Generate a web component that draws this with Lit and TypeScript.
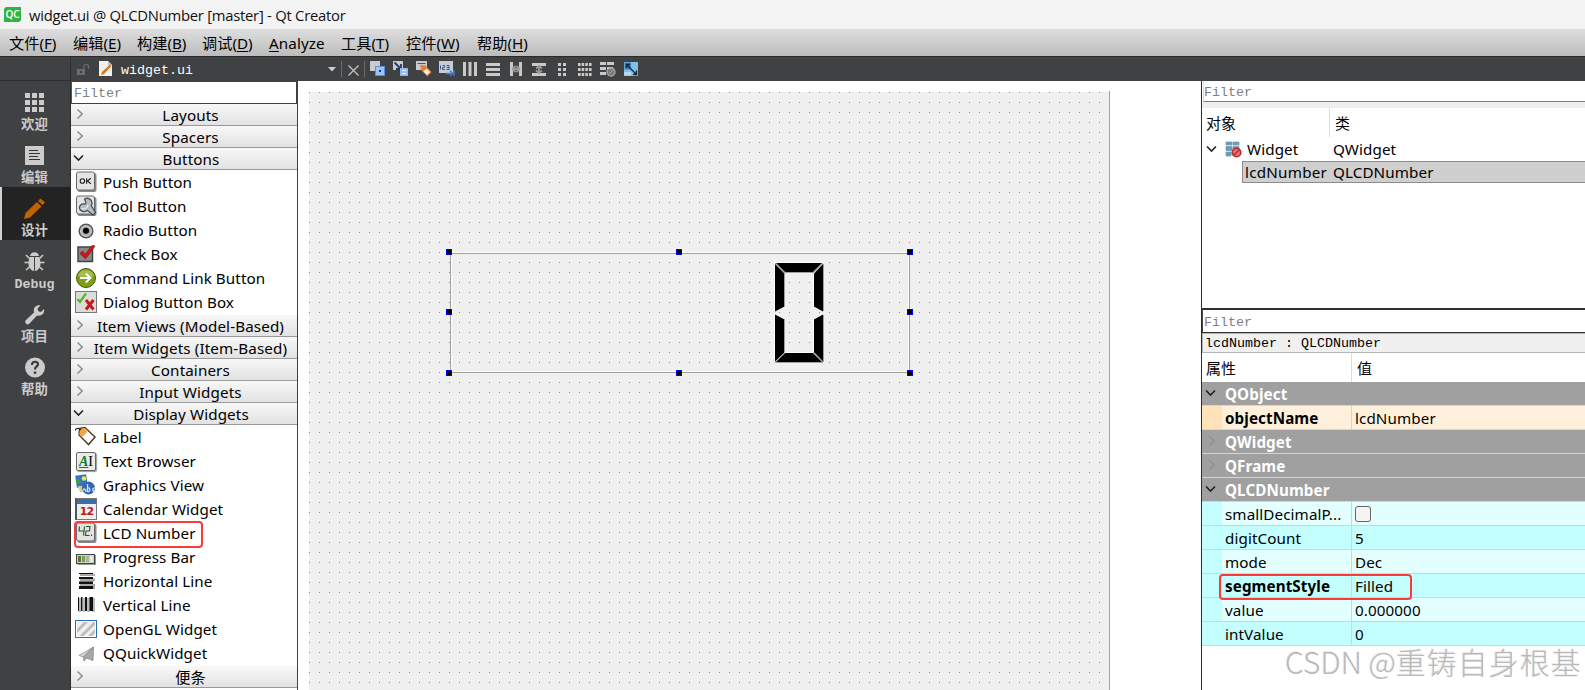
import { LitElement, html, css, svg, nothing } from "lit";
import { customElement } from "lit/decorators.js";
import { classMap } from "lit/directives/class-map.js";

const chevronRight = svg`<svg class="chev" width="8" height="12" viewBox="0 0 8 12"><path d="M1.5 1.5 6.2 6 1.5 10.5" fill="none" stroke="#8c8c8c" stroke-width="1.5"/></svg>`;
const chevronDown = svg`<svg class="chev" width="12" height="8" viewBox="0 0 12 8"><path d="M1 1.5 5.5 6 10 1.5" fill="none" stroke="#222" stroke-width="1.6"/></svg>`;

const box = (body: unknown) => html`<svg width="22" height="22" viewBox="0 0 22 22">${body}</svg>`;

const frame = svg`
  <rect x="2.5" y="2" width="19" height="19" rx="2" fill="#8a8a8a"/>
  <rect x="1.5" y="1" width="18" height="18" rx="2" fill="#e4e4e4" stroke="#666"/>`;

const icons: Record<string, unknown> = {
  push: box(svg`${frame}<g fill="none" stroke="#222" stroke-width="1.1"><ellipse cx="7.4" cy="10" rx="2.2" ry="2.3"/><path d="M11.6 7.3v5.4M15.8 7.3l-3.4 2.7 3.4 2.7"/></g>`),
  tool: box(svg`${frame}<path d="M4.500 13.500c-.5-2.500 1.500-4.800 4.500-4.500 1.800.2 2.500-.8 1.500-2.500L9.500 4c3.500-2 7.500.5 7.500 4 0 1.500-.8 2.800-.8 2.800l4.300 6.700-2.500 2.500-5.500-4.500c-3 1.800-6.800 1.500-8-2z" fill="#b9bec5" stroke="#4a4f57" stroke-width="1.300"/><path d="M6.500 13.500c3 1 6-.5 6.500-3.500" stroke="#fff" fill="none"/>`),
  radio: box(svg`<circle cx="11" cy="12" r="6.800" fill="#c9c9c9" stroke="#555" stroke-width="1.500"/><circle cx="11" cy="12" r="4.600" fill="#aaa"/><circle cx="11" cy="11.800" r="3" fill="#000"/>`),
  check: box(svg`<rect x="3" y="4" width="14.500" height="14.500" fill="#888" stroke="#444" stroke-width="1.500"/><path d="M5 10.500 7.500 8l2.700 3.500L17 2.500l3 .6-9.400 12.700z" fill="#d81818" stroke="#8a0d0d" stroke-width=".8"/>`),
  command: box(svg`<circle cx="11" cy="11" r="9.500" fill="#7f9d16" stroke="#46570b"/><path d="M3 9a8.300 8.300 0 0 1 16 0c-4 2-12 2-16 0z" fill="#a5bd4e"/><path d="M5 11h10M10.800 6.500 15.400 11l-4.600 4.500" fill="none" stroke="#fff" stroke-width="2"/>`),
  dialog: box(svg`<rect x=".5" y=".5" width="21" height="21" fill="#dcdcdc" stroke="#777"/><path d="M2.500 8 5 11l6-8.500" fill="none" stroke="#57b32a" stroke-width="2.200"/><path d="M11 9l7.500 9.500M18.500 9 11 18.500" stroke="#c41c1c" stroke-width="3"/>`),
  label: box(svg`<path d="M5 3.500 10.500 2l10.500 9-7.500 9L4.500 9.500z" fill="#777" opacity=".5"/><path d="M4.500 2.500 10 1.500l10 9.500-6.500 7.500L4 9z" fill="#fff" stroke="#4d3115" stroke-width="1.300"/><path d="M5 3l5-1 3 3-6 6.500L4.500 8.500z" fill="#f0a64f"/><path d="M0 4.500C1 2 4 1.500 6 4" fill="none" stroke="#222" stroke-width="1.200"/>`),
  textb: html`<span class="text-icon"><i>A</i><b>I</b></span>`,
  graphics: box(svg`<rect x="1" y="1" width="11" height="12" fill="#2f78c8" transform="rotate(-8 6 7)"/><circle cx="9" cy="4.500" r="2.300" fill="#ffe14a"/><path d="M1 6c2-2 4-1 4.500 1S4 10 2 10z" fill="#44a031"/><path d="M3 12h5v6H5z" fill="#d8c98a"/><circle cx="13.500" cy="14" r="6.500" fill="#3567ad"/><path d="M8 16.500c1.500-3 3-1 3 1.500M12.500 10v7.500c3 1 3-4.500.3-3.500M20 14c-3-.5-3 4 0 3.500" fill="none" stroke="#cfe0f6" stroke-width="1.300"/>`),
  calendar: html`<span class="cal-icon"><span class="cal-top"></span><span class="cal-day">12</span></span>`,
  lcd: box(svg`${frame}<g fill="none" stroke="#1d5a1d" stroke-width="1.100"><path d="M4.500 4.500 4 9h5M9.500 4.500 8.500 13.500M11 4.500h4l-.5 4.500h-3.500l-.5 4.500h4"/><path d="M16.500 12.500v1.500"/></g>`),
  progress: box(svg`<rect x="2.500" y="9" width="18.500" height="10" fill="#999"/><rect x="1.500" y="8.500" width="18" height="9" fill="#cfd3c8" stroke="#444"/><path d="M3 10h3v6H3z" fill="#4f7d2b"/><path d="M7 10h3v6H7z" fill="#7d9a61"/><path d="M11 10h3v6h-3z" fill="#a9b59b"/><path d="M15 10h3v6h-3z" fill="#e6e8e2"/>`),
  hline: box(svg`<path d="M5 4h15v2H5zM5 8.500h15v3H5zM5 14h15v5H5z" fill="#aaa"/><path d="M4 3h14v1H4zM4 7h14v2H4zM4 11.500h14v2.500H4zM4 16h14v3H4z" fill="#111"/>`),
  vline: box(svg`<path d="M4 4h2v14H4zM8 4h2v14H8zM12 4h3v14h-3zM17 4h3v14h-3z" fill="#bbb"/><path d="M3 3h1v14H3zM6 3h1.500v14H6zM10 3h2v14h-2zM14.500 3H18v14h-3.500z" fill="#111"/>`),
  opengl: box(svg`<rect x=".5" y="2.500" width="21" height="17" fill="#fff" stroke="#2c6cb8"/><rect x="2" y="4" width="18" height="14" fill="#f0f0f0"/><path d="M2 11 9 4h4L2 15zM4.500 18 18.500 4H20v2.500L8.500 18zM13 18l7-7v4l-3 3z" fill="#bdbdbd"/>`),
  quick: box(svg`<path d="M18.500 5 4 13.500l4.500 1.500z" fill="#d5d5d5" stroke="#888" stroke-width=".7"/><path d="M18.500 5 8.500 15l.5 4 2.500-3 6.500 2.500z" fill="#a9a9a9" stroke="#777" stroke-width=".7"/>`),
};

const rail = [
  { text: "欢迎", icon: svg`<path d="M1 1h5v5H1zM8 1h5v5H8zM15 1h5v5h-5zM1 8h5v5H1zM8 8h5v5H8zM15 8h5v5h-5zM1 15h5v5H1zM8 15h5v5H8zM15 15h5v5h-5z"/>` },
  { text: "编辑", icon: svg`<path d="M1 1h19v19H1z"/><path d="M5 5.500h9M5 8.500h11M5 11.500h9M5 14.500h11" stroke="#333" stroke-width="1.200"/>` },
  { text: "设计", icon: svg`<path d="M0 21l1.500-6L13 4l4.500 4.500L6 19.500zM14 3l2.500-2.500L21 4.500 18.500 7z" fill="#bf6200"/>`, active: true },
  { text: "Debug", icon: svg`<path d="M6 5a4.600 4.600 0 0 1 9 0z"/><path d="M10 6v14c-3-.5-5.500-3.500-5.500-7.500 0-3 .8-5 1.700-6.500zM11 6v14c3-.5 5.500-3.500 5.500-7.500 0-3-.8-5-1.700-6.500z"/><path d="M2 4l4 4M19 4l-4 4M.5 11.500h4.500M20.500 11.500H16M2 19l4-3.500M19 19l-4-3.500" stroke="#ccc" stroke-width="1.600"/>`, mono: true },
  { text: "项目", icon: svg`<path d="M1.500 16.500 10 8.500C9 4 12 .5 16.500 1.500L13.500 4.500l.8 2.700 2.700.8 3-3c1 4.500-2.500 7.500-7 6.500l-8 8.500c-2.500 1.500-4.500-1-3.500-3.500z"/>` },
  { text: "帮助", icon: svg`<circle cx="11" cy="10.500" r="10"/><path d="M8 8c0-4.500 6.500-4 6-.5-.3 2-3 2-3 5" fill="none" stroke="#3a3b3d" stroke-width="2.200"/><path d="M9.800 14.500h2.400v2.400H9.800z" fill="#3a3b3d"/>` },
];

type Group = { name: string; open?: boolean; items?: [string, string][] };
const groups: Group[] = [
  { name: "Layouts" },
  { name: "Spacers" },
  { name: "Buttons", open: true, items: [["push", "Push Button"], ["tool", "Tool Button"], ["radio", "Radio Button"], ["check", "Check Box"], ["command", "Command Link Button"], ["dialog", "Dialog Button Box"]] },
  { name: "Item Views (Model-Based)" },
  { name: "Item Widgets (Item-Based)" },
  { name: "Containers" },
  { name: "Input Widgets" },
  { name: "Display Widgets", open: true, items: [["label", "Label"], ["textb", "Text Browser"], ["graphics", "Graphics View"], ["calendar", "Calendar Widget"], ["lcd", "LCD Number"], ["progress", "Progress Bar"], ["hline", "Horizontal Line"], ["vline", "Vertical Line"], ["opengl", "OpenGL Widget"], ["quick", "QQuickWidget"]] },
  { name: "便条" },
];

const tools = [
  svg`<path d="M0 0h10v10H0z" fill="#c9cbce"/><path d="M5 5h10v10H5z" fill="#5b8fe0"/><path d="M6 6h8v8H6z" fill="#9cc2fa"/><path d="M9 9h2v2H9z" fill="#123a86"/>`,
  svg`<path d="M0 0h10v9H0z" fill="#c9cbce"/><path d="M1.500 1.500l5.500 5.500M8 3v5H3" stroke="#1f3c66" stroke-width="1.800" fill="none"/><path d="M7 7h8v8H7z" fill="#8fb8f4"/><path d="M9 9.500h4M9 12.500h4" stroke="#fff"/>`,
  svg`<path d="M0 0h11v9H0z" fill="#c9cbce"/><path d="M1.500 2.500h8" stroke="#555"/><path d="M4 4l5.500.5L15.500 11l-4 4.500-6-6z" fill="#ee7a33"/><path d="M10.500 7.500 14 11l-3 3-3.500-3.500z" fill="#fff0e3"/>`,
  svg`<path d="M0 0h14v12H0z" fill="#c9cbce"/><path d="M1.500 4.500v4M3.500 4.500h2v2h-2v2h2.500M7.500 4.500h2.500v4H7.500M7.500 6.500H10" stroke="#2560b0" fill="none"/><path d="M7 12.500h6M11 9.500l2.500 3-2.500 2.500M15 9v6" stroke="#3c7de0" stroke-width="1.400" fill="none"/>`,
  svg`<path d="M1 1h3v14H1zM6.500 1h3v14h-3zM12 1h3v14h-3z" fill="#c9c9c9"/>`,
  svg`<path d="M1 2h14v3H1zM1 7h14v3H1zM1 12h14v3H1z" fill="#c9c9c9"/>`,
  svg`<path d="M2 1h3v14H2zM11 1h3v14h-3z" fill="#c9c9c9"/><path d="M5 8h6M7.500 5 4.500 8l3 3M8.500 5l3 3-3 3" stroke="#999" stroke-width="1.800" fill="none"/>`,
  svg`<path d="M1 2h14v3H1zM1 12h14v3H1z" fill="#c9c9c9"/><path d="M8 5v7M5 7.500 8 5l3 2.500M5 9.500 8 12l3-2.500" stroke="#999" stroke-width="1.800" fill="none"/>`,
  svg`<path d="M4 2h3v3H4zM9 2h3v3H9zM4 7h3v3H4zM9 7h3v3H9zM4 12h3v3H4zM9 12h3v3H9z" fill="#c9c9c9"/>`,
  svg`<path d="M1 2h2.600v3H1zM4.600 2h2.600v3H4.600zM8.300 2h2.600v3H8.300zM12 2h2.600v3H12zM1 7h2.600v3H1zM4.600 7h2.600v3H4.600zM8.300 7h2.600v3H8.300zM12 7h2.600v3H12zM1 12h2.600v3H1zM4.600 12h2.600v3H4.600zM8.300 12h2.600v3H8.300zM12 12h2.600v3H12z" fill="#c9c9c9"/>`,
  svg`<path d="M0 1h6v3H0zM7 1h7v3H7zM0 6h6v3H0zM7 6h6v2H7zM0 11h6v3H0z" fill="#c9c9c9"/><circle cx="11" cy="11" r="4" fill="#777" stroke="#aaa" stroke-width="1.300"/><path d="M8.500 13.500l5-5" stroke="#aaa"/>`,
  svg`<path d="M1 1h14v14H1z" fill="#7fc0e8"/><path d="M1.500 1.500h6.500v7H1.500z" fill="#3c7fb6"/><path d="M1 11h7v3.500H1z" fill="#b9d6ea"/><path d="M4 4l9 9M3.500 7V3.500H7M13.500 9.500v4H10" stroke="#0c2740" stroke-width="1.400" fill="none"/>`,
];

const menus = [
  ["文件", "F", "m1"], ["编辑", "E", "m1"], ["构建", "B", "m2"], ["调试", "D", "m3"],
  ["", "A", "m4"], ["工具", "T", "m1"], ["控件", "W", "m2"], ["帮助", "H", "m3"],
];

type Prop = { name: string; value?: string; kind: string; open?: boolean; bold?: boolean; check?: boolean };
const props: Prop[] = [
  { name: "QObject", kind: "group", open: true },
  { name: "objectName", value: "lcdNumber", kind: "cream", bold: true },
  { name: "QWidget", kind: "group" },
  { name: "QFrame", kind: "group" },
  { name: "QLCDNumber", kind: "group", open: true },
  { name: "smallDecimalP...", kind: "light", check: true },
  { name: "digitCount", value: "5", kind: "cyan" },
  { name: "mode", value: "Dec", kind: "light" },
  { name: "segmentStyle", value: "Filled", kind: "cyan", bold: true },
  { name: "value", value: "0.000000", kind: "light" },
  { name: "intValue", value: "0", kind: "cyan" },
];

@customElement("app-root")
export class AppRoot extends LitElement {
  static styles = css`
    :host {
      display: flex; flex-direction: column; position: relative; width: 1585px; height: 690px; overflow: hidden;
      font: 15.2px "Noto Sans", "Noto Sans CJK SC", sans-serif; color: #000; background: #fff; white-space: nowrap;
    }
    * { box-sizing: border-box; }
    svg { display: block; flex: none; }
    .title { height: 29px; flex: none; background: #f3f3f3; display: flex; align-items: center; padding-left: 4px; gap: 8px; }
    .title-text { font-family: "Open Sans", sans-serif; font-size: 14.8px; letter-spacing: -.25px; color: #111; }
    .logo { width: 17px; height: 15px; background: #2fb344; border-radius: 3px 0 3px 0; color: #fff; font: 600 10px/15px "Open Sans", sans-serif; text-align: center; }
    .menu { height: 27px; flex: none; background: linear-gradient(#dedede, #bcbcbc); display: flex; align-items: center; padding-left: 9px; font-size: 15.2px; }
    .m { flex: none; line-height: 26px; }
    .m1 { width: 64px; } .m2 { width: 65px; } .m3 { width: 67px; } .m4 { width: 72px; letter-spacing: .1px; }
    .m1:nth-child(6) { width: 65px; } .m2:nth-child(7) { width: 71px; }
    u { text-underline-offset: 2px; text-decoration-thickness: 1px; }
    .bar { height: 25px; flex: none; background: #404142; border-top: 1px solid #2b2b2b; display: flex; }
    .bar-left { width: 71px; border-right: 1px solid #2e2e2e; border-bottom: 1px solid #2c2c2c; }
    .bar-file { width: 266px; display: flex; align-items: center; padding-left: 6px; color: #fff; }
    .mono { font-family: "Liberation Mono", "Noto Sans CJK SC", monospace; font-size: 13.34px; }
    .file-name { margin-left: 8px; font-size: 13.34px; flex: 1; padding-top: 2px; }
    .lock { margin-right: 8px; }
    .sep { width: 1px; height: 16px; background: #6a6a6a; margin: 4px 0 0 4px; }
    .sep.last { margin-left: 0; }
    .close { padding: 7px 5px 0 6px; }
    .tools { display: flex; gap: 7px; padding: 4px 0 0 5px; }
    .body { flex: 1; min-height: 0; display: flex; }
    .rail { width: 71px; background: #404142; display: flex; flex-direction: column; flex: none; border-right: 1px solid #2c2c2c; }
    .mode { height: 53px; display: flex; flex-direction: column; align-items: center; padding-top: 11px; color: #ccc; font: bold 13.4px/16px "Noto Sans CJK SC", sans-serif; gap: 2px; border-left: 2px solid transparent; padding-right: 3px; }
    .mode.on { background: #222322; border-left-color: #d0d0d0; }
    .mode.mono { font: bold 13.34px/17px "Liberation Mono", monospace; gap: 4px; }
    .boxes { width: 227px; flex: none; border-right: 1px solid #404040; background: #fff; }
    .filter { font-family: "Liberation Mono", monospace; font-size: 13.34px; color: #808080; }
    .f1 { height: 23px; border: 1px solid #404142; border-left: 1px solid #555; padding-left: 2px; line-height: 23px; }
    .group { height: 22px; background: linear-gradient(#f8f8f8, #e2e2e2); border-bottom: 1px solid #999; display: flex; align-items: center; padding-left: 5px; }
    .group .chev { margin-top: -1px; }
    .group.open { padding-left: 2px; }
    .gname { flex: 1; text-align: center; letter-spacing: .12px; padding: 1px 0 0 0; line-height: 20px; }
    .items { padding-top: 1px; }
    .item { height: 24px; display: flex; align-items: center; padding-left: 4px; gap: 6px; }
    .item svg { margin-top: -2px; }
    .iname { letter-spacing: .09px; line-height: 22px; padding-bottom: 2px; }
    .text-icon { width: 20px; height: 19px; margin: -2px 1px 0; border: 1px solid #666; border-radius: 2px; background: #e8ecea; display: flex; justify-content: center; font: 14px/17px "Liberation Serif", serif; flex: none; box-shadow: 1px 1px 1px #999; }
    .text-icon i { color: #17782c; text-decoration: underline; font-weight: bold; }
    .text-icon b { font-weight: normal; }
    .cal-icon { width: 22px; height: 22px; border: 1px solid #777; border-left: 2px solid #555; background: #eee; display: flex; flex-direction: column; flex: none; margin-top: -2px; }
    .cal-top { height: 5px; background: #3b6ea8; }
    .cal-day { color: #c01818; font: bold 11px/15px "DejaVu Sans", sans-serif; text-align: center; letter-spacing: -.8px; }
    .canvas { flex: 1; position: relative; }
    .form { position: absolute; left: 11px; top: 10px; }
    .right { width: 384px; flex: none; border-left: 1px solid #2d2d2d; display: flex; flex-direction: column; }
    .f2 { height: 21px; margin-left: 1px; border-bottom: 1px solid #808080; padding-left: 0; line-height: 23px; border-left: 1px solid #ddd; }
    .gap { height: 6px; background: #efefef; }
    .cols { display: flex; height: 29px; line-height: 31px; font-size: 15px; }
    .c1 { width: 128px; padding-left: 4px; border-right: 1px solid #ddd; }
    .c1.wide { width: 150px; }
    .c2 { padding-left: 5px; }
    .tree { height: 171px; letter-spacing: .1px; }
    .trow { display: flex; align-items: center; height: 24px; padding-left: 4px; }
    .tn { width: 86px; margin-left: 5px; }
    .trow svg + svg { margin-left: 7px; }
    .tsel { margin-left: 40px; height: 22px; border: 1px solid #8c8c8c; border-right: none; background: #cfcfcf; display: flex; align-items: center; padding-left: 2px; }
    .tsel .n { width: 88px; letter-spacing: .25px; }
    .f3 { height: 25px; border: 2px solid #2f2f2f; border-width: 2px 0 1px 1px; border-left-color: #444; padding-left: 1px; line-height: 25px; }
    .sel-label { height: 20px; border: 1px solid #b5b5b5; border-right: 0; background: #f0f0f0; padding-left: 2px; line-height: 20px; }
    .prop { height: 24px; display: flex; border-bottom: 1px solid #d4d4d4; line-height: 24px; letter-spacing: .1px; }
    .gut { width: 20px; padding: 7px 0 0 3px; flex: none; }
    .pn { width: 130px; padding-left: 3px; border-right: 1px solid #d4d4d4; flex: none; }
    .pv { flex: 1; padding-left: 3px; }
    .group-row { background: #a0a0a0; color: #fff; font-weight: bold; }
    .group-row .pn { border: none; }
    .group-row .dim { opacity: .75; padding-left: 6px; padding-top: 5px; }
    .cream { background: #fff0dc; } .cream .gut { background: #ffe2b8; }
    .light { background: #e4ffff; } .light .gut, .cyan { background: #c4ffff; }
    .bold .pn { font-weight: bold; }
    .cb { width: 16px; height: 16px; border: 1px solid #666; border-radius: 3px; background: #f4f4f4; margin-top: 4px; }
    .mark { position: absolute; border: 2px solid #fb3a3a; border-radius: 4px; }
    .mark-lcd { left: 74px; top: 521px; width: 129px; height: 27px; }
    .mark-seg { left: 1219px; top: 574px; width: 193px; height: 26px; }
    .wm { position: absolute; left: 1285px; top: 640px; font: 300 30px/42px "Noto Sans CJK SC", sans-serif; color: #b9b9b9; text-shadow: -1px -1px 0 #eee; }
    .wm-cjk { letter-spacing: 1px; }
  `;

  private form() {
    const xs = [446, 676, 907].map((x) => x - 309);
    const ys = [249, 309, 370].map((y) => y - 92);
    const handles = ys.flatMap((y, r) => xs.map((x, c) => (r === 1 && c === 1 ? nothing
      : svg`<rect x=${x + 0.5} y=${y + 0.5} width="5" height="5" fill="#000" stroke="#0000e6"/>`)));
    return html`<svg class="form" width="801" height="599" viewBox="0 -1 801 599">
      <defs><pattern id="dots" width="10" height="10" patternUnits="userSpaceOnUse"><rect width="1" height="1" fill="#8f8f8f"/></pattern></defs>
      <path d="M0 0h800v600H0z" fill="#f0f0f0"/><path d="M0 0h800v600H0z" fill="url(#dots)"/>
      <path d="M800.5 -1v600" stroke="#a0a0a0"/>
      <g fill="none"><path d="M141 160.500h459M142.500 162v117M599.500 162v118M142 279.500h458" stroke="#fff"/>
      <path d="M141.500 161.500h459v119h-459z" stroke="#a0a0a0"/></g>
      <g fill="#000">
        <path d="M467 171h46l-9 9h-28z"/><path d="M466 172l9.500 9.500v33l-9.500 5z"/><path d="M514 172l-9 9.500v33l9 5z"/>
        <path d="M466 222.500l9.500 5v33l-9.500 9z"/><path d="M514 222.500l-9 5v33l9 9z"/><path d="M476 261h28l9 9h-46z"/>
      </g>
      <g fill="none" stroke="#a0a0a0">
        <path d="M466 171l9.500 9.500h29l9.500-9.500M475.500 181v33M475.500 228v32M514.500 172v47M514.500 223v47M466 270.500h48M466 270l10-9.500M505 260.500l9 9.500"/>
        <path d="M466 170.500h48M465.500 171v48M465.500 222v48M475.500 260.500h29M504.500 182v32M504.500 228v32" stroke="#fff"/>
      </g>
      ${handles}
    </svg>`;
  }

  render() {
    return html`
      <div class="title"><span class="logo">QC</span><span class="title-text">widget.ui @ QLCDNumber [master] - Qt Creator</span></div>
      <div class="menu">${menus.map(([t, k, w]) => html`<span class="m ${w}">${t ? html`${t}(<u>${k}</u>)` : html`<u>A</u>nalyze`}</span>`)}</div>
      <div class="bar">
        <div class="bar-left"></div>
        <div class="bar-file">
          <svg class="lock" width="13" height="13" viewBox="0 0 13 13"><path d="M0 6h8v6H0z" fill="#6b6b6b"/><path d="M7 6V3.500a2 2 0 0 1 4.500 0V6" fill="none" stroke="#6b6b6b" stroke-width="1.200"/><path d="M3 8h2v2H3z" fill="#404142"/></svg>
          <svg width="15" height="16" viewBox="0 0 15 16"><path d="M1 0h9l4 4v11H1z" fill="#f2f0ec"/><path d="M10 0v4h4z" fill="#b9b9b9"/><path d="M3 14l1-3L12 3.500l1.500 1.500-7.500 8z" fill="#d9741c"/></svg>
          <span class="mono file-name">widget.ui</span>
          <svg width="9" height="5" viewBox="0 0 9 5"><path d="M0 0h8L4 4.500z" fill="#d0d0d0"/></svg>
        </div>
        <div class="sep"></div>
        <svg class="close" width="22" height="20" viewBox="0 0 11 11"><path d="M.5 .5 10.500 10.500M10.500 .5 .5 10.500" stroke="#c4c4c4" stroke-width="1.300"/></svg>
        <div class="sep last"></div>
        <div class="tools">${tools.map((t) => html`<svg width="16" height="16" viewBox="0 0 16 16">${t}</svg>`)}</div>
      </div>
      <div class="body">
        <div class="rail">${rail.map((m) => html`<div class=${classMap({ mode: true, on: !!m.active, mono: !!m.mono })}>
          <svg width="21" height="21" viewBox="0 0 21 21" fill="#ccc">${m.icon}</svg><span>${m.text}</span></div>`)}</div>
        <div class="boxes">
          <div class="filter f1">Filter</div>
          ${groups.map((g) => html`<div class=${classMap({ group: true, open: !!g.open })}>${g.open ? chevronDown : chevronRight}<span class="gname">${g.name}</span></div>
            ${g.items ? html`<div class="items">${g.items.map(([i, n]) => html`<div class="item">${icons[i]}<span class="iname">${n}</span></div>`)}</div>` : nothing}`)}
        </div>
        <div class="canvas">${this.form()}</div>
        <div class="right">
          <div class="filter f2">Filter</div>
          <div class="gap"></div>
          <div class="cols"><span class="c1">对象</span><span class="c2">类</span></div>
          <div class="tree">
            <div class="trow">${chevronDown}
              <svg width="17" height="17" viewBox="0 0 17 17"><path d="M1 1h6v3H1zM8 1h6v3H8zM1 5.500h6v4H1zM8 5.500h6v4H8zM1 11h5v4H1z" fill="#5f9dc8" stroke="#7d97ab" stroke-width=".8"/><circle cx="11.500" cy="11.500" r="4.300" fill="#d77" stroke="#b52a2a" stroke-width="1.600"/><path d="M8.500 14.500l6-6" stroke="#b52a2a" stroke-width="1.500"/></svg>
              <span class="tn">Widget</span><span>QWidget</span></div>
            <div class="tsel"><span class="n">lcdNumber</span><span>QLCDNumber</span></div>
          </div>
          <div class="filter f3">Filter</div>
          <div class="mono sel-label">lcdNumber : QLCDNumber</div>
          <div class="cols"><span class="c1 wide">属性</span><span class="c2">值</span></div>
          ${props.map((p) => html`<div class=${classMap({ prop: true, "group-row": p.kind === "group", cream: p.kind === "cream", light: p.kind === "light", cyan: p.kind === "cyan", bold: !!p.bold })}>
            <span class=${classMap({ gut: true, dim: p.kind === "group" && !p.open })}>${p.kind === "group" ? (p.open ? chevronDown : chevronRight) : nothing}</span>
            <span class="pn">${p.name}</span><span class="pv">${p.check ? html`<div class="cb"></div>` : p.value ?? ""}</span></div>`)}
        </div>
      </div>
      <div class="mark mark-lcd"></div>
      <div class="mark mark-seg"></div>
      <div class="wm">CSDN @<span class="wm-cjk">重铸自身根基</span></div>
    `;
  }
}
